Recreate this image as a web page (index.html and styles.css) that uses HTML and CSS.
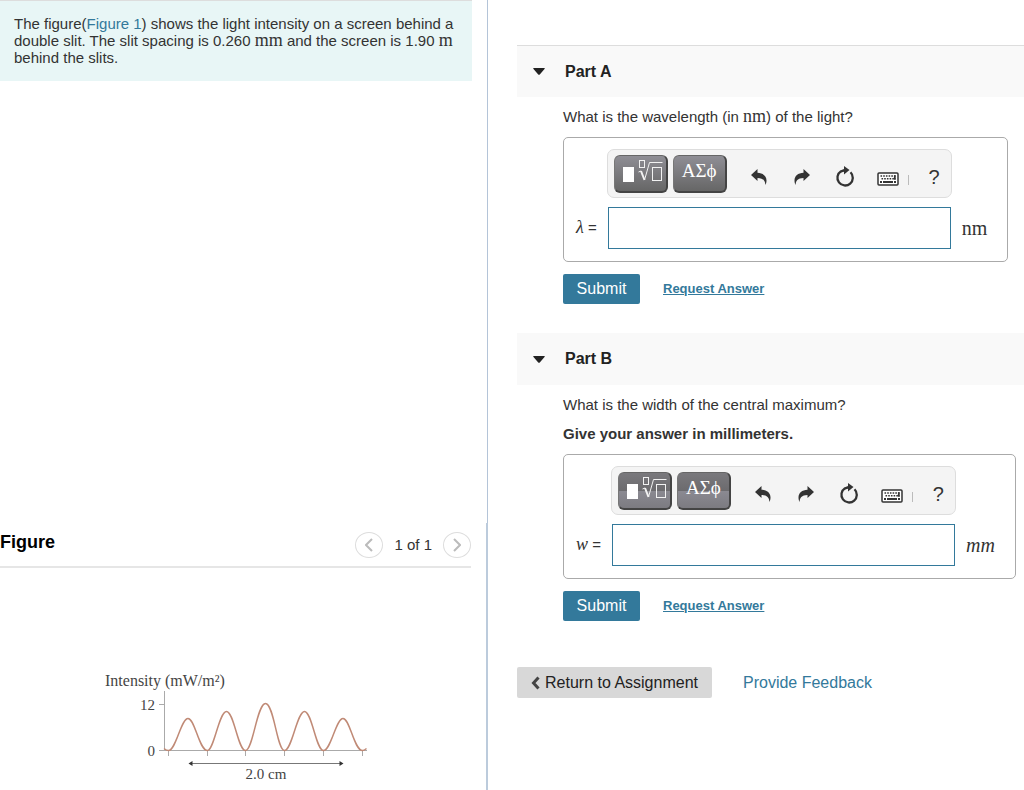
FILE: index.html
```
<!DOCTYPE html>
<html lang="en">
<head>
    <meta charset="UTF-8">
    <meta name="viewport" content="width=device-width, initial-scale=1.0">
    <title>Double slit</title>
    <link rel="stylesheet" href="styles.css">
</head>
<body>
    <!-- shared icons -->
    <svg class="sprite" aria-hidden="true">
        <symbol id="icon-template" viewBox="0 0 54 38">
            <rect x="8" y="11" width="11" height="15" fill="#fff"/>
            <g fill="none" stroke="#f2f2f2" stroke-width="1">
                <rect x="24.500" y="4.500" width="5" height="7"/>
                <path d="M34.500 6.500h13"/>
                <rect x="37.500" y="11.500" width="9" height="13"/>
                <path d="M23.500 16l2.500-1"/>
                <path d="M29.500 24L34.500 6.500"/>
                <path d="M26 15l3.500 9" stroke-width="2"/>
            </g>
        </symbol>
        <symbol id="icon-undo" viewBox="0 0 16 16">
            <path fill="#333" d="M0 6L6.500 0v3.800C12 4 15.500 7 15.500 11.500c0 1.800-.4 3.200-1.200 4.500.1-4-2-7-7.800-7v3z"/>
        </symbol>
        <symbol id="icon-reset" viewBox="0 0 20 22">
            <path fill="none" stroke="#333" stroke-width="2.300" d="M6 5.300A7.700 7.700 0 1 0 15.500 6.300"/>
            <path fill="#333" d="M9 0l5.500 4L9 8.500V5.700L6 6.500 5.200 4.600 9 3z"/>
        </symbol>
        <symbol id="icon-keyboard" viewBox="0 0 22 14">
            <rect x="1" y="1" width="20" height="12" rx="1" fill="#fff" stroke="#333" stroke-width="1.500"/>
            <path stroke="#333" stroke-width="1.600" stroke-dasharray="1.600 1.100" d="M3.500 4h15.500M4.500 6.800h14"/>
            <path stroke="#333" stroke-width="1.800" d="M3 10h2M6 10h10M17 10h2M17.800 3.200v4.500"/>
        </symbol>
    </svg>

    <div class="page">
        <div class="left">
            <div class="left-top">
                <p class="intro">The figure(<a href="#figure">Figure 1</a>) shows the light intensity on a screen behind a double slit. The slit spacing is 0.260 <span class="math">mm</span> and the screen is 1.90 <span class="math">m</span> behind the slits.</p>
            </div>

            <section class="figure-panel" id="figure">
                <div class="figure-header">
                    <h2>Figure</h2>
                    <div class="pager">
                        <button type="button" aria-label="Previous figure">
                            <svg width="8" height="14" viewBox="0 0 8 14"><path d="M7 1L1 7l6 6"/></svg>
                        </button>
                        <span>1 of 1</span>
                        <button type="button" aria-label="Next figure">
                            <svg width="8" height="14" viewBox="0 0 8 14"><path d="M1 1l6 6-6 6"/></svg>
                        </button>
                    </div>
                </div>
                <svg class="chart" width="300" height="130" viewBox="0 0 300 130" role="img" aria-label="Intensity graph">
                    <text class="chart-title" x="15" y="26">Intensity (mW/m²)</text>
                    <text x="65" y="50" text-anchor="end">12</text>
                    <text x="65" y="96" text-anchor="end">0</text>
                    <path class="axis" d="M74.500 31v60M69 44.500h5M69 90.500h208M78.500 91v5M117.500 91v5M155.500 91v5M194.500 91v5M233.500 91v5M272.500 91v5"/>
                    <path class="wave" d="M74 88.500Q76.500 90.500 78.500 90.500C86 90.500 91 58.500 98 58.500S109 90.500 117.500 90.500C124 90.500 129 51.500 136.500 51.500S148 90.500 155.500 90.500C163 90.500 167 43.500 175.500 43.500S187 90.500 194.500 90.500C202 90.500 207 51.500 214.500 51.500S226 90.500 233.500 90.500C241 90.500 246 58.500 253 58.500S264 90.500 272.500 90.500Q274 90.500 276.500 88.500"/>
                    <path class="axis-dark" d="M101 103.500h150"/>
                    <path class="tip" d="M98.500 103.500l4-2.500v5zM253.500 103.500l-4-2.500v5z"/>
                    <text x="176" y="119" text-anchor="middle">2.0 cm</text>
                </svg>
            </section>
        </div>

        <main class="right">
            <section class="part">
                <div class="part-header part-header-first">
                    <button type="button" class="toggle" aria-label="Collapse Part A">
                        <svg width="12" height="7" viewBox="0 0 12 7"><path d="M1 0h10q1.500 0 .5 1L7 6.300q-1 1-2 0L.5 1Q-.500 0 1 0z"/></svg>
                    </button>
                    <h2>Part A</h2>
                </div>
                <div class="part-body">
                    <p>What is the wavelength (in <span class="math">nm</span>) of the light?</p>
                    <div class="answer-box">
                        <div class="toolbar">
                            <button type="button" class="mode" aria-label="Templates"><svg width="54" height="38"><use href="#icon-template"/></svg></button>
                            <button type="button" class="mode">ΑΣϕ</button>
                            <div class="tools">
                                <button type="button" aria-label="Undo"><svg width="16" height="16"><use href="#icon-undo"/></svg></button>
                                <button type="button" aria-label="Redo"><svg class="flip" width="16" height="16"><use href="#icon-undo"/></svg></button>
                                <button type="button" aria-label="Reset"><svg width="20" height="22"><use href="#icon-reset"/></svg></button>
                                <button type="button" class="keyboard" aria-label="Keyboard shortcuts"><svg width="22" height="14"><use href="#icon-keyboard"/></svg></button>
                                <button type="button" class="help">?</button>
                            </div>
                        </div>
                        <label for="lambda"><i class="math">λ</i> =</label>
                        <input type="text" id="lambda">
                        <span class="unit math">nm</span>
                    </div>
                    <div class="actions">
                        <button type="button" class="submit">Submit</button>
                        <a href="#">Request Answer</a>
                    </div>
                </div>
            </section>

            <section class="part">
                <div class="part-header">
                    <button type="button" class="toggle" aria-label="Collapse Part B">
                        <svg width="12" height="7" viewBox="0 0 12 7"><path d="M1 0h10q1.500 0 .5 1L7 6.300q-1 1-2 0L.5 1Q-.500 0 1 0z"/></svg>
                    </button>
                    <h2>Part B</h2>
                </div>
                <div class="part-body">
                    <p>What is the width of the central maximum?</p>
                    <p><strong>Give your answer in millimeters.</strong></p>
                    <div class="answer-box">
                        <div class="toolbar toolbar-split">
                            <button type="button" class="mode" aria-label="Templates"><svg width="54" height="38"><use href="#icon-template"/></svg></button>
                            <button type="button" class="mode">ΑΣϕ</button>
                            <div class="tools">
                                <button type="button" aria-label="Undo"><svg width="16" height="16"><use href="#icon-undo"/></svg></button>
                                <button type="button" aria-label="Redo"><svg class="flip" width="16" height="16"><use href="#icon-undo"/></svg></button>
                                <button type="button" aria-label="Reset"><svg width="20" height="22"><use href="#icon-reset"/></svg></button>
                                <button type="button" class="keyboard" aria-label="Keyboard shortcuts"><svg width="22" height="14"><use href="#icon-keyboard"/></svg></button>
                                <button type="button" class="help">?</button>
                            </div>
                        </div>
                        <label for="width"><i class="math">w</i> =</label>
                        <input type="text" id="width">
                        <i class="unit math">mm</i>
                    </div>
                    <div class="actions">
                        <button type="button" class="submit">Submit</button>
                        <a href="#">Request Answer</a>
                    </div>
                </div>
            </section>

            <div class="page-footer">
                <button type="button" class="return">
                    <svg width="9" height="14" viewBox="0 0 9 14"><path d="M7.500 1.500L2.500 7l5 5.500"/></svg>
                    Return to Assignment
                </button>
                <a href="#">Provide Feedback</a>
            </div>
        </main>
    </div>
</body>
</html>
```
FILE: styles.css
```
* {
    margin: 0;
    padding: 0;
    box-sizing: border-box;
}

body {
    font-family: "Liberation Sans", Arial, sans-serif;
    font-size: 15px;
    line-height: 20px;
    color: #333;
    background: #fff;
}

button {
    font-family: inherit;
    border: none;
    background: none;
    cursor: pointer;
}

a {
    color: #33799b;
    text-decoration: none;
}

svg {
    display: block;
}

.sprite {
    display: none;
}

.math {
    font-family: "Liberation Serif", "Times New Roman", serif;
    font-size: 18px;
    line-height: 1;
}

.page {
    display: grid;
    grid-template-columns: 488fr 536fr;
    min-height: 100vh;
}

/* left column */
.left {
    display: flex;
    flex-direction: column;
}

.left-top {
    flex: 1;
    padding-right: 15px;
    border-right: 1px solid #b4c4d8;
}

.intro {
    padding: 14px 14px 15px;
    line-height: 17px;
    background: #e8f6f6;
    border-top: 1px solid #ddd;
}

.intro .math {
    line-height: 16px;
}

.figure-panel {
    padding-right: 15px;
    border-right: 2px solid #bccbdc;
}

.figure-header {
    display: flex;
    justify-content: space-between;
    align-items: center;
    height: 45px;
    border-bottom: 2px solid #e6e6e6;
}

.figure-header h2 {
    padding-bottom: 6px;
    font-size: 18px;
    color: #000;
}

.pager {
    display: flex;
    align-items: center;
    gap: 11px;
}

.pager button {
    display: flex;
    align-items: center;
    justify-content: center;
    width: 28px;
    height: 26px;
    border: 1px solid #ddd;
    border-radius: 50%;
}

.pager svg {
    fill: none;
    stroke: #bbb;
    stroke-width: 2;
}

.chart {
    margin: 92px 0 0 90px;
}

.chart text {
    font-family: "Liberation Serif", "Times New Roman", serif;
    font-size: 15px;
    fill: #444;
}

.chart .chart-title {
    font-size: 16px;
}

.axis {
    fill: none;
    stroke: #aaa;
}

.axis-dark {
    stroke: #777;
}

.tip {
    fill: #333;
}

.wave {
    fill: none;
    stroke: #c08a76;
    stroke-width: 1.5;
}

/* right column */
.right {
    padding: 45px 0 0 29px;
}

.part-header {
    display: flex;
    align-items: center;
    height: 52px;
    padding-left: 16px;
    background: #f9f9f9;
}

.part-header-first {
    border-top: 1px solid #ddd;
}

.part-header h2 {
    font-size: 16px;
    color: #222;
}

.toggle {
    width: 32px;
    height: 12px;
}

.toggle svg {
    fill: #222;
}

.part-body {
    padding: 10px 0 29px 46px;
}

.part-body p {
    height: 20px;
    margin-bottom: 9px;
}

.answer-box {
    display: grid;
    grid-template-columns: auto 343px auto;
    column-gap: 11px;
    align-items: center;
    width: fit-content;
    margin: 10px 0 12px;
    padding: 11px 20px 12px 12px;
    border: 1px solid #aaa;
    border-radius: 5px;
}

.toolbar {
    grid-column: 2;
    display: flex;
    gap: 5px;
    height: 49px;
    margin: 0 -1px 9px;
    padding: 5px 6px;
    background: #f4f4f4;
    border: 1px solid #ddd;
    border-radius: 7px;
}

.mode {
    flex-shrink: 0;
    width: 54px;
    height: 38px;
    padding-bottom: 6px;
    border: 1px solid #444;
    border-top-color: #666;
    border-left-color: #777;
    border-bottom-width: 2px;
    border-right-width: 2px;
    border-radius: 6px;
    background: linear-gradient(#8f8e95, #666);
    color: #fff;
    font-family: "Liberation Serif", "Times New Roman", serif;
    font-size: 19px;
    overflow: hidden;
}

.toolbar-split .mode {
    background: linear-gradient(#7a797d, #6c6b6e 50%, #8b8a92 50%, #7c7b81);
}

.tools {
    display: flex;
    align-items: center;
    padding: 7px 0 0 6px;
}

.tools button {
    display: flex;
    justify-content: center;
    align-items: center;
    width: 43px;
    height: 20px;
}

.flip {
    transform: scaleX(-1);
}

.tools .keyboard {
    padding-top: 4px;
}

.tools .help {
    justify-content: flex-start;
    width: 32px;
    margin-left: -2px;
    color: #333;
    font-size: 20px;
}

.tools .help::before {
    content: "";
    width: 1px;
    height: 10px;
    margin: 5px 20px 0 0;
    background: #bbb;
}

.answer-box label {
    grid-column: 1;
}

.answer-box input {
    width: 100%;
    height: 42px;
    padding: 0 8px;
    border: 1px solid #33799b;
    font-size: 16px;
}

.answer-box .unit {
    font-size: 20px;
}

.actions {
    display: flex;
    align-items: center;
    gap: 23px;
}

.actions a {
    font-size: 13px;
    font-weight: bold;
    text-decoration: underline;
}

.submit {
    width: 77px;
    height: 30px;
    border-radius: 2px;
    background: #33799b;
    color: #fff;
    font-size: 16px;
}

.page-footer {
    display: flex;
    align-items: center;
    gap: 31px;
    margin-top: 17px;
    font-size: 16px;
}

.return {
    display: flex;
    align-items: center;
    justify-content: center;
    gap: 5px;
    width: 195px;
    height: 31px;
    border-radius: 2px;
    background: #d8d8d8;
    color: #222;
    font-size: 16px;
}

.return svg {
    fill: none;
    stroke: #444;
    stroke-width: 3;
}
```
